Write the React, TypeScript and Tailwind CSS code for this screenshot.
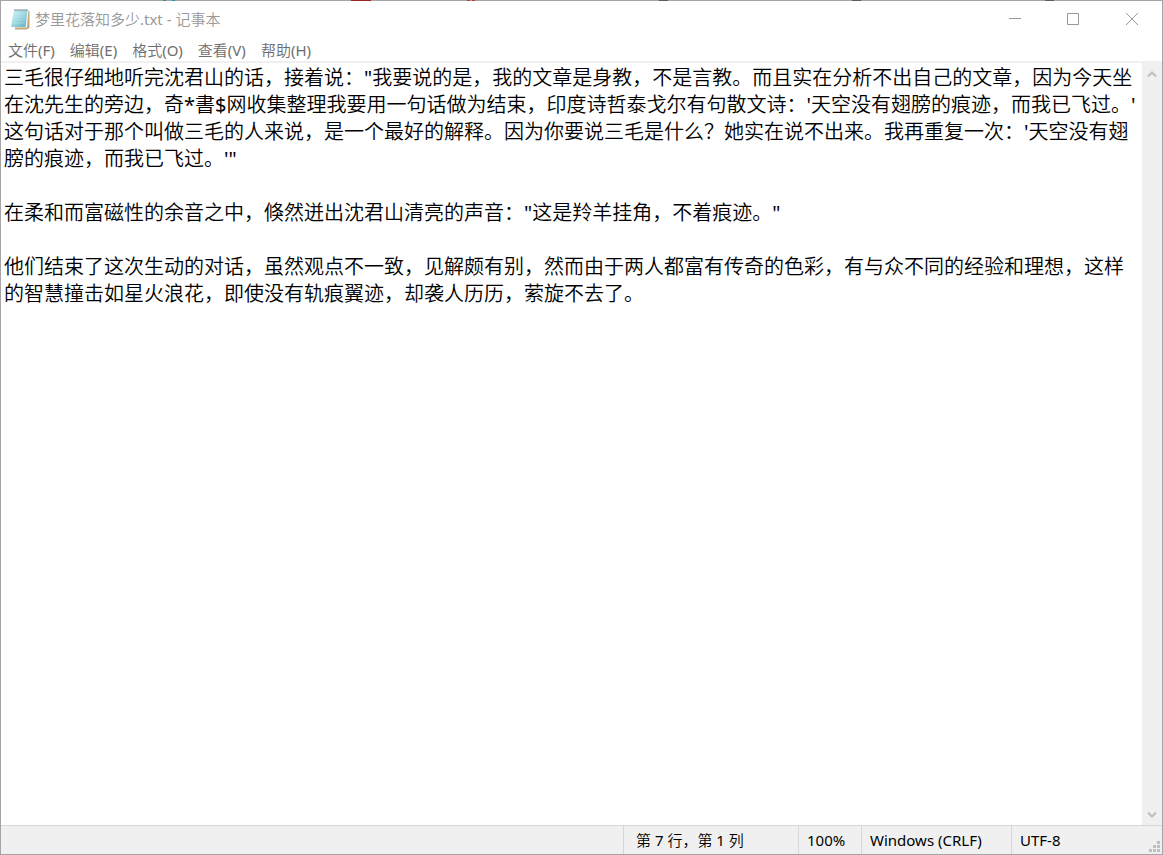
import { useState } from "react";

const menus = ["文件(F)", "编辑(E)", "格式(O)", "查看(V)", "帮助(H)"];

// \u200b allows a line break after the closing quote
const content = [
  `三毛很仔细地听完沈君山的话，接着说："我要说的是，我的文章是身教，不是言教。而且实在分析不出自己的文章，因为今天坐在沈先生的旁边，奇*書$网收集整理我要用一句话做为结束，印度诗哲泰戈尔有句散文诗：'天空没有翅膀的痕迹，而我已飞过。'\u200b这句话对于那个叫做三毛的人来说，是一个最好的解释。因为你要说三毛是什么？她实在说不出来。我再重复一次：'天空没有翅膀的痕迹，而我已飞过。'"`,
  `在柔和而富磁性的余音之中，倏然迸出沈君山清亮的声音："这是羚羊挂角，不着痕迹。"`,
  `他们结束了这次生动的对话，虽然观点不一致，见解颇有别，然而由于两人都富有传奇的色彩，有与众不同的经验和理想，这样的智慧撞击如星火浪花，即使没有轨痕翼迹，却袭人历历，萦旋不去了。`,
].join("\n\n");

const NotepadIcon = () => (
  <svg width="20" height="22" viewBox="0 0 20 22" aria-hidden="true">
    <defs>
      <linearGradient id="page" x1="0" y1="0" x2="1" y2="1">
        <stop offset="0" stopColor="#d3f1f5" />
        <stop offset="0.5" stopColor="#9bd7e2" />
        <stop offset="1" stopColor="#5aabbf" />
      </linearGradient>
    </defs>
    <path d="M6 3h13.500v17l-3 1.500H5z" fill="#c2a878" />
    <path d="M4 2h14.500L17 19.500H2z" fill="#eef6f6" />
    <path d="M4 2h13.500L15.500 19H1z" fill="url(#page)" />
    <path d="M3.500 6h13M3 9h13M2.500 12h13M2 15h13" stroke="#fff" strokeOpacity=".25" />
    <path d="M5 1v2M7 1v2M9 1v2M11 1v2M13 1v2M15 1v2M17 1v2" stroke="#6d7f86" strokeWidth=".9" />
  </svg>
);

const TopEdge = () => (
  <div className="flex h-px bg-[#a5a5a5]">
    <i className="ml-[163px] w-[3px] bg-[#2d8ba8]" />
    <i className="ml-[6px] w-[3px] bg-[#2d8ba8]" />
    <i className="ml-[176px] w-[20px] bg-[#9b2525]" />
    <i className="ml-[96px] w-[3px] bg-[#c13333]" />
    <i className="ml-[2px] w-[3px] bg-[#c13333]" />
    <i className="ml-[184px] w-[9px] bg-[#5f5960]" />
    <i className="ml-[184px] w-[9px] bg-[#5f5960]" />
    <i className="ml-[184px] w-[9px] bg-[#5f5960]" />
  </div>
);

const TitleBar = () => (
  <header className="flex h-9 items-center pl-[9px]">
    <NotepadIcon />
    <h1 className="ml-[5px] flex-1 text-[15px] leading-5 text-[#999]">梦里花落知多少.txt - 记事本</h1>
    <div className="flex h-full text-[#999]">
      <button type="button" aria-label="最小化" className="flex w-[58px] items-center justify-center">
        <svg width="12" height="12" stroke="currentColor">
          <path d="M0 5.500h12" />
        </svg>
      </button>
      <button type="button" aria-label="最大化" className="flex w-[58px] items-center justify-center">
        <svg width="12" height="12" fill="none" stroke="currentColor">
          <path d="M.500.500h11v11h-11z" />
        </svg>
      </button>
      <button type="button" aria-label="关闭" className="flex w-[60px] items-center justify-center">
        <svg width="12" height="12" stroke="currentColor">
          <path d="M0 0l12 12M12 0L0 12" />
        </svg>
      </button>
    </div>
  </header>
);

const MenuBar = () => (
  <nav className="flex h-6 items-center gap-[15px] pt-px pl-[7px] text-[15px] leading-5 text-[#6d6d6d]">
    {menus.map((m) => (
      <button key={m} type="button">
        {m}
      </button>
    ))}
  </nav>
);

const ScrollBar = () => (
  <div className="flex w-5 flex-col justify-between bg-[#f0f0f0] text-[#bfbfbf]">
    <button type="button" aria-label="向上滚动" className="flex h-[22px] items-center justify-center">
      <svg width="10" height="7" fill="none" stroke="currentColor" strokeWidth="2">
        <path d="M1 5.500l4-4 4 4" />
      </svg>
    </button>
    <button type="button" aria-label="向下滚动" className="flex h-[22px] items-center justify-center">
      <svg width="10" height="7" fill="none" stroke="currentColor" strokeWidth="2">
        <path d="M1 1.500l4 4 4-4" />
      </svg>
    </button>
  </div>
);

const StatusBar = () => (
  <footer className="flex h-[29px] border-t border-[#d7d7d7] bg-[#f0f0f0] text-[15px] leading-[29px] text-black">
    <div className="flex-1" />
    <div className="w-[175px] border-l border-[#d7d7d7] pl-3">第 7 行，第 1 列</div>
    <div className="w-[63px] border-l border-[#d7d7d7] pl-2">100%</div>
    <div className="w-[150px] border-l border-[#d7d7d7] pl-2">Windows (CRLF)</div>
    <div className="flex w-[151px] justify-between border-l border-[#d7d7d7] pl-2">
      <span>UTF-8</span>
      <svg width="11" height="11" fill="#bfbfbf" className="mr-[2px] mb-[2px] self-end">
        <path d="M8 0h3v3H8zM4 4h3v3H4zM8 4h3v3H8zM0 8h3v3H0zM4 8h3v3H4zM8 8h3v3H8z" />
      </svg>
    </div>
  </footer>
);

const App = () => {
  const [text, setText] = useState(content);

  return (
    <div className="flex h-screen flex-col bg-white font-['Noto_Sans','Noto_Sans_CJK_SC_DemiLight','Noto_Sans_CJK_SC',sans-serif]">
      <TopEdge />
      <div className="flex min-h-0 flex-1 flex-col border-x border-b border-[#a5a5a5]">
        <TitleBar />
        <MenuBar />
        <main className="flex min-h-0 flex-1 border-t-2 border-[#f0f0f0]">
          <textarea
            aria-label="文本编辑器"
            spellCheck={false}
            value={text}
            onChange={(e) => setText(e.target.value)}
            className="flex-1 resize-none overflow-hidden pt-px pr-1 pl-[3px] text-[20px] leading-[27px] text-black outline-none"
          />
          <ScrollBar />
        </main>
        <StatusBar />
      </div>
    </div>
  );
};

export default App;
